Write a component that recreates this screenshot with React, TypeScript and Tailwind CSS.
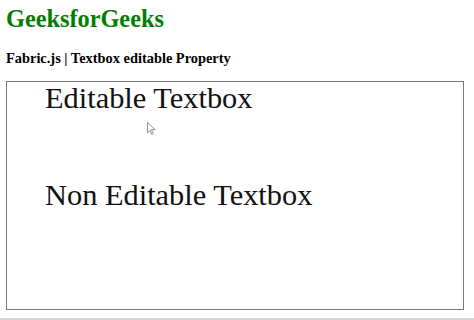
export default function App() {
  return (
    <div className="relative w-[474px] h-[320px] overflow-hidden bg-white font-['Liberation_Serif',serif]">
      <div className="pl-[6px] pt-[7px]">
        <h1 className="text-[24.3px] leading-none font-bold text-[#008000]">GeeksforGeeks</h1>
        <h3 className="mt-[20px] text-[14.4px] leading-none font-bold text-black">
          Fabric.js | Textbox editable Property
        </h3>

        {/* canvas */}
        <div className="mt-[15px] w-[458px] h-[229px] border border-[#7a7a7a] pl-[38px] pt-[1px]">
          <p className="text-[30.4px] leading-none text-[#111]">Editable Textbox</p>
          <p className="mt-[67px] text-[30.4px] leading-none text-[#111]">Non Editable Textbox</p>
        </div>
      </div>

      <div className="mt-[8px] h-[3px] bg-[#d4d4d4]" />

      {/* mouse pointer */}
      <svg
        className="absolute left-[147px] top-[122px]"
        width="9"
        height="13"
        viewBox="0 0 12 18"
      >
        <path
          d="M0.5 0.5 L0.5 15 L4 11.5 L6.5 17 L8.5 16 L6 10.5 L11 10.5 Z"
          fill="#fff"
          stroke="#666"
          strokeWidth="1"
        />
      </svg>
    </div>
  );
}
